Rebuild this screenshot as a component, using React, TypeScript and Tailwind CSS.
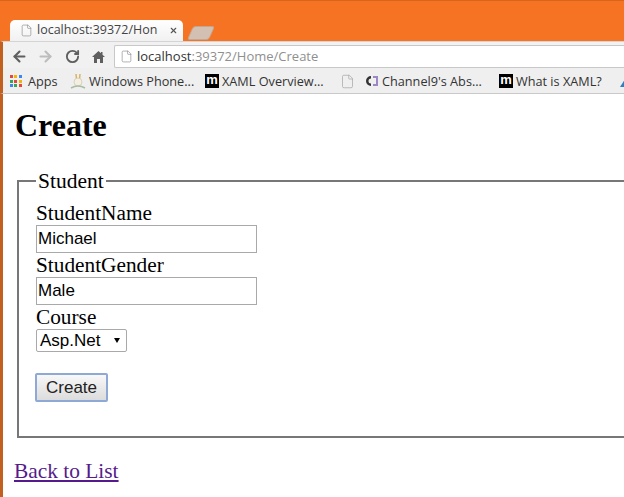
import React from "react"
import { ArrowLeft, ArrowRight, RotateCw, File, X } from "lucide-react"

const bookmarks = [
  { label: "Windows Phone...", icon: "bunny", width: "w-[135px]" },
  { label: "XAML Overview...", icon: "m", width: "w-[135px]" },
  { label: "", icon: "file", width: "w-[24px]" },
  { label: "Channel9's Abs...", icon: "c9", width: "w-[135px]" },
  { label: "What is XAML?", icon: "m", width: "w-[119px]" },
]

function AppsIcon() {
  const colors = ["#e8453c", "#f4b400", "#3f86f4", "#34a853", "#e8453c", "#f4b400", "#3f86f4", "#34a853", "#e8453c"]
  return (
    <div className="grid grid-cols-3 gap-[1px] w-[12px] h-[12px] shrink-0">
      {colors.map((c, i) => (
        <span key={i} className="block w-[3px] h-[3px]" style={{ backgroundColor: c }} />
      ))}
    </div>
  )
}

function BookmarkIcon({ type }: { type: string }) {
  if (type === "m") {
    return (
      <span className="w-[14px] h-[14px] bg-black text-white text-[13px] font-bold leading-[12px] text-center shrink-0 font-['Liberation_Sans',sans-serif]">
        m
      </span>
    )
  }
  if (type === "file") {
    return <File size={15} strokeWidth={1.2} className="text-[#a8a8a8] shrink-0" />
  }
  if (type === "c9") {
    return (
      <svg width="15" height="14" viewBox="0 0 15 14" className="shrink-0">
        <path d="M7 2 A5 5 0 1 0 7 12 L7 9.5 A2.5 2.5 0 1 1 7 4.5 Z" fill="#333" />
        <path d="M9 2 H14 V12 H9 V10 H12 V4 H9 Z" fill="#9d86c4" />
      </svg>
    )
  }
  return (
    <svg width="16" height="18" viewBox="0 0 16 18" className="shrink-0">
      <path d="M6 2 L6.5 7 M10 2 L9.5 7" stroke="#d9b36a" strokeWidth="1.5" />
      <ellipse cx="8" cy="10" rx="4" ry="4" fill="#f3efe2" stroke="#cfc7a8" strokeWidth="0.7" />
      <path d="M1 16 Q8 12 15 16" stroke="#a9bda5" strokeWidth="1.5" fill="none" />
    </svg>
  )
}

export default function App() {
  return (
    <div className="w-[624px] h-[497px] overflow-hidden bg-white text-black font-['Liberation_Serif',serif]">
      {/* tab strip */}
      <div className="h-[41px] bg-[#f57322] border-t border-[#d9641c] flex items-end pl-[3px]">
        <div className="w-[173px] h-[21px] bg-gradient-to-b from-white to-[#f1f1f1] rounded-t-[5px] flex items-center pl-[10px] gap-[4px] ml-[7px] font-['Open_Sans',sans-serif]">
          <File size={13} strokeWidth={1.2} className="text-[#8a8a8a] shrink-0" />
          <span className="text-[12.5px] leading-none text-[#444] whitespace-nowrap overflow-hidden w-[122px]">
            localhost:39372/Hon
          </span>
          <X size={9} strokeWidth={3} className="text-[#555] shrink-0 ml-[6px]" />
        </div>
        <div className="w-[22px] h-[14px] bg-[#d3c0b2] rounded-[3px] -skew-x-[24deg] ml-[7px] mb-[1px] border border-[#c9a58c]" />
      </div>

      {/* toolbar */}
      <div className="h-[27px] bg-[#f1f1f1] border-l-[3px] border-[#c2601f] flex items-end pl-[8px] border-t border-t-[#d4d4d4]">
        <div className="flex items-center gap-[7px] h-[23px]">
          <ArrowLeft size={17} strokeWidth={3} className="text-[#5f5f5f]" />
          <ArrowRight size={17} strokeWidth={3} className="text-[#bdbdbd] ml-[2px]" />
          <RotateCw size={15} strokeWidth={3} className="text-[#5f5f5f] ml-[4px]" />
          <svg width="15" height="14" viewBox="0 0 15 14" className="ml-[4px]">
            <path d="M7.5 1 L1 7 H3 V13 H6 V9 H9 V13 H12 V7 H14 L11.5 4.7 V2 H10 V3.3 Z" fill="#5f5f5f" />
          </svg>
        </div>
        <div className="flex-1 h-[23px] bg-white border border-[#c8c8c8] border-r-0 rounded-l-[2px] flex items-center pl-[5px] gap-[4px] ml-[8px] font-['Open_Sans',sans-serif] text-[13px]">
          <File size={13} strokeWidth={1.2} className="text-[#8a8a8a] shrink-0" />
          <span className="leading-none whitespace-nowrap">
            <span className="text-[#333]">localhost</span>
            <span className="text-[#8f8f8f]">:39372/Home/Create</span>
          </span>
        </div>
      </div>

      {/* bookmarks */}
      <div className="h-[25px] bg-[#efefef] border-l-[3px] border-[#c2601f] flex items-center pl-[7px] pt-[2px] font-['Open_Sans',sans-serif] text-[12.7px] text-[#333] whitespace-nowrap">
        <div className="flex items-center gap-[6px] w-[60px] shrink-0">
          <AppsIcon />
          <span>Apps</span>
        </div>
        {bookmarks.map((b, i) => (
          <div key={i} className={`flex items-center gap-[3px] shrink-0 ${b.width}`}>
            <BookmarkIcon type={b.icon} />
            {b.label && <span>{b.label}</span>}
          </div>
        ))}
        <svg width="10" height="14" viewBox="0 0 10 14" className="shrink-0">
          <path d="M9 1 L2 12 H9 Z" fill="#2f7fc1" />
        </svg>
      </div>

      {/* page */}
      <div className="h-[404px] border-l-[3px] border-[#c2601f] border-t border-t-[#c9c9c9] pl-[12px]">
        <h1 className="text-[32px] font-bold leading-[37px] mt-[13px]">Create</h1>

        <fieldset className="w-[640px] h-[269px] mt-[25px] ml-[2px] border-2 border-[#777] pl-[17px] box-border">
          <legend className="text-[21.5px] leading-[24px] px-[2px]">Student</legend>
          <div className="text-[21.3px] leading-[24px] mt-[8px]">StudentName</div>
          <input
            readOnly
            value="Michael"
            className="block w-[221px] h-[28px] border border-[#a9a9a9] px-[1px] text-[17px] font-['Liberation_Sans',sans-serif]"
          />
          <div className="text-[21.3px] leading-[24px]">StudentGender</div>
          <input
            readOnly
            value="Male"
            className="block w-[221px] h-[28px] border border-[#a9a9a9] px-[1px] text-[17px] font-['Liberation_Sans',sans-serif]"
          />
          <div className="text-[21.3px] leading-[24px]">Course</div>
          <div className="w-[91px] h-[23px] border border-[#a9a9a9] rounded-[2px] flex items-center justify-between pl-[3px] pr-[6px] text-[17px] font-['Liberation_Sans',sans-serif]">
            <span>Asp.Net</span>
            <span className="w-0 h-0 border-x-[3px] border-x-transparent border-t-[5px] border-t-black" />
          </div>
          <button className="block w-[73px] h-[29px] mt-[21px] -ml-[1px] border-2 border-[#8fa9d6] rounded-[2px] bg-gradient-to-b from-[#f8f8f8] to-[#dcdcdc] text-[17px] text-[#222] font-['Liberation_Sans',sans-serif]">
            Create
          </button>
        </fieldset>

        <a href="#" className="block w-fit text-[21.4px] leading-[24px] mt-[21px] -ml-[1px] text-[#551a8b] underline">
          Back to List
        </a>
      </div>
    </div>
  )
}
